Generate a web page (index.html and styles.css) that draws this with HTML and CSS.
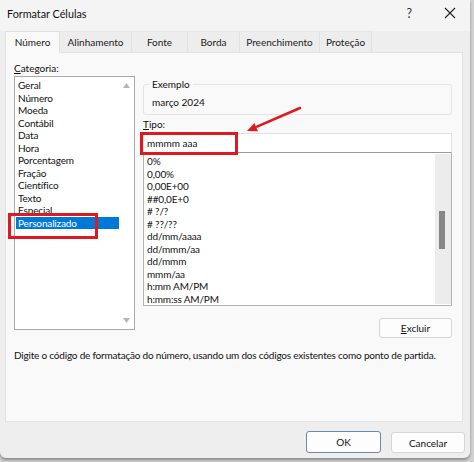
FILE: index.html
```html
<!DOCTYPE html>
<html lang="pt">
<head>
<meta charset="utf-8">
<title>Formatar Células</title>
<link rel="stylesheet" href="styles.css">
</head>
<body>
<div class="dialog">
  <div class="titlebar">
    <span class="title">Formatar Células</span>
    <span class="help">?</span>
    <svg class="close" width="12" height="12" viewBox="0 0 12 12"><path d="M1 1 L11 11 M11 1 L1 11" stroke="#222" stroke-width="1.1" fill="none"/></svg>
  </div>
  <div class="tabs">
    <div class="tab active t1">Número</div>
    <div class="tab t2">Alinhamento</div>
    <div class="tab t3">Fonte</div>
    <div class="tab t4">Borda</div>
    <div class="tab t5">Preenchimento</div>
    <div class="tab t6">Proteção</div>
  </div>
  <div class="panel">
    <div class="cols">
      <div class="leftcol">
        <div class="label"><u>C</u>ategoria:</div>
        <div class="listbox">
          <ul class="items">
            <li>Geral</li>
            <li>Número</li>
            <li>Moeda</li>
            <li>Contábil</li>
            <li>Data</li>
            <li>Hora</li>
            <li>Porcentagem</li>
            <li>Fração</li>
            <li>Científico</li>
            <li>Texto</li>
            <li>Especial</li>
            <li class="sel">Personalizado<span class="redbox rb1"></span></li>
          </ul>
          <div class="vscroll">
            <svg width="7" height="5" viewBox="0 0 7 5"><path d="M0 5 L3.5 0 L7 5 Z" fill="#b5b5b5"/></svg>
            <svg width="7" height="5" viewBox="0 0 7 5"><path d="M0 0 L3.5 5 L7 0 Z" fill="#b5b5b5"/></svg>
          </div>
        </div>
      </div>
      <div class="rightcol">
        <fieldset class="sample">
          <legend>Exemplo</legend>
          <div class="sampletext">março 2024</div>
        </fieldset>
        <div class="label tipo"><u>T</u>ipo:</div>
        <div class="input">mmmm aaa<span class="redbox rb2"></span>
          <svg class="arrow" width="62" height="32" viewBox="0 0 62 32"><path d="M56 6 L13 24.6" stroke="#dc1a1f" stroke-width="2.6" fill="none" stroke-linecap="round"/><path d="M3 29 L13.96 29.15 L10.38 20.89 Z" fill="#dc1a1f"/></svg>
        </div>
        <div class="fmtlist">
          <ul class="items fmt">
            <li>0%</li>
            <li>0,00%</li>
            <li>0,00E+00</li>
            <li>##0,0E+0</li>
            <li># ?/?</li>
            <li># ??/??</li>
            <li>dd/mm/aaaa</li>
            <li>dd/mmm/aa</li>
            <li>dd/mmm</li>
            <li>mmm/aa</li>
            <li>h:mm AM/PM</li>
            <li>h:mm:ss AM/PM</li>
          </ul>
          <div class="vscroll2"><div class="thumb"></div></div>
        </div>
        <div class="btnrow"><button class="btn excluir"><u>E</u>xcluir</button></div>
      </div>
    </div>
    <p class="desc">Digite o código de formatação do número, usando um dos códigos existentes como ponto de partida.</p>
  </div>
  <div class="footer">
    <button class="btn ok">OK</button>
    <button class="btn cancel">Cancelar</button>
  </div>
</div>
</body>
</html>
```

FILE: styles.css
```css
* { box-sizing: border-box; }
html, body { margin: 0; padding: 0; }
body {
  width: 474px;
  height: 462px;
  background: #d2d2d2;
  font-family: "Lato", "Noto Sans", sans-serif;
  color: #111;
  overflow: hidden;
}
.dialog {
  width: 470px;
  height: 458px;
  background: #eeeeee;
  border-radius: 0 0 6px 6px;
  box-shadow: 0 2px 3px rgba(0,0,0,0.35);
  display: flex;
  flex-direction: column;
}
.titlebar {
  height: 31px;
  background: #f4f4f4;
  display: flex;
  align-items: center;
  padding: 0 0 5px 7px;
}
.title { font-size: 10.8px; flex: 1; color: #111; }
.help { font-size: 12.5px; color: #333; margin-right: 32px; }
.close { margin-right: 14px; }
.tabs {
  display: flex;
  height: 21px;
  margin-left: 5px;
  position: relative;
  z-index: 1;
}
.tab {
  font-size: 10px;
  color: #1a1a1a;
  display: flex;
  align-items: center;
  justify-content: center;
  border-right: 1px solid #e2e2e2;
  border-top: 1px solid #e6e6e6;
  background: #ededed;
}
.tab.active {
  background: #f9f9f9;
  border: 1px solid #e0e0e0;
  border-bottom: 1px solid #f9f9f9;
  height: 22px;
}
.t1 { width: 55px; }
.t2 { width: 72px; }
.t3 { width: 56px; }
.t4 { width: 52px; }
.t5 { width: 80px; }
.t6 { width: 52px; }
.panel {
  margin: 0 7px 0 5px;
  height: 370px;
  background: #f9f9f9;
  border: 1px solid #e2e2e2;
  padding: 7px 10px 0 8px;
}
.cols { display: flex; gap: 8px; }
.leftcol { width: 121px; }
.rightcol { flex: 1; display: flex; flex-direction: column; }
.label { font-size: 10px; height: 16px; line-height: 16px; color: #111; }
.listbox {
  height: 254px;
  background: #fff;
  border: 1px solid #a9a9a9;
  display: flex;
}
.items {
  list-style: none;
  margin: 0;
  padding: 2px 0 0 1px;
  flex: 1;
  font-size: 10px;
  letter-spacing: -0.15px;
}
.items li {
  height: 12.5px;
  line-height: 12.5px;
  padding-left: 2px;
  color: #111;
  white-space: nowrap;
}
.items li.sel {
  background: #0078d7;
  color: #fff;
  position: relative;
}
.vscroll {
  width: 15px;
  display: flex;
  flex-direction: column;
  justify-content: space-between;
  align-items: center;
  padding: 6px 0 6px;
}
.redbox {
  position: absolute;
  border: 3px solid #dc1a1f;
  pointer-events: none;
}
.rb1 { left: -8px; top: -4px; width: 90px; height: 26px; }
.sample {
  border: 1px solid #e4e4e4;
  border-radius: 3px;
  padding: 0 0 0 8px;
  height: 37px;
  margin: 18px 0 0 0;
}
.sample legend {
  font-size: 10px;
  padding: 0 3px;
  margin-left: -3px;
  color: #111;
}
.sampletext { font-size: 10px; padding-top: 6px; color: #111; }
.tipo { margin-top: 2px; height: 14px; line-height: 14px; }
.input {
  margin-top: 2px;
  height: 20px;
  background: #fff;
  border: 1px solid #e1e1e1;
  border-bottom: 1px solid #9a9a9a;
  font-size: 10px;
  line-height: 18px;
  padding-left: 3px;
  position: relative;
}
.rb2 { left: -4px; top: -2px; width: 98px; height: 23px; }
.arrow { position: absolute; left: 100px; top: -32px; }
.fmtlist {
  height: 153px;
  background: #fff;
  border: 1px solid #b3b3b3;
  border-top: none;
  display: flex;
}
.fmt { padding-top: 2px; }
.vscroll2 {
  width: 16px;
  background: #ececec;
  margin: 1px 0 1px;
  position: relative;
}
.thumb {
  position: absolute;
  left: 4px;
  top: 57px;
  width: 6px;
  height: 38px;
  background: #878787;
}
.btnrow { display: flex; justify-content: flex-end; margin-top: 12px; }
.btn {
  font-family: inherit;
  font-size: 10px;
  color: #111;
  background: #fdfdfd;
  border: 1px solid #d6d6d6;
  border-radius: 3px;
  padding: 0;
}
.excluir { width: 73px; height: 20px; }
.desc {
  margin: 11px 0 0 0;
  font-size: 10px;
  letter-spacing: -0.2px;
  color: #111;
  white-space: nowrap;
}
.footer {
  display: flex;
  justify-content: flex-end;
  gap: 10px;
  padding: 9px 5px 0 0;
}
.ok { width: 75px; height: 22px; border: 1px solid #6c8aa3; }
.cancel { width: 74px; height: 21px; margin-top: 1px; }
```
